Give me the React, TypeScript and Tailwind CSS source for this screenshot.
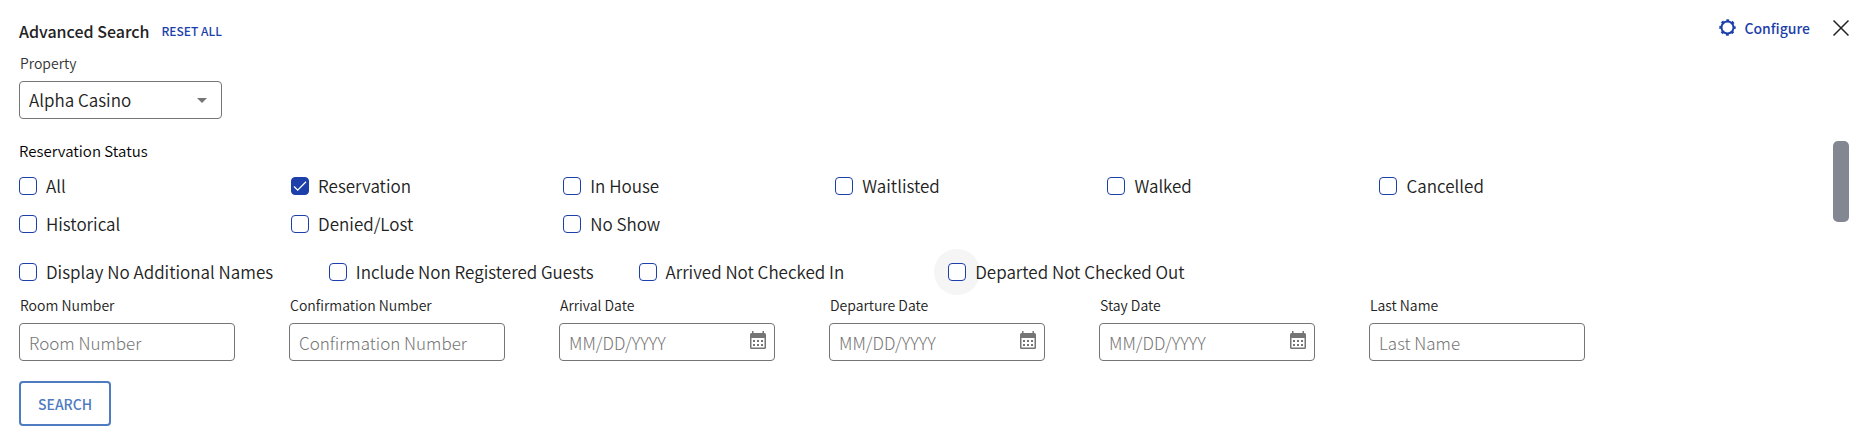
import { useState } from 'react';

const STATUSES = [
  'All',
  'Reservation',
  'In House',
  'Waitlisted',
  'Walked',
  'Cancelled',
  'Historical',
  'Denied/Lost',
  'No Show',
];

const OPTIONS = [
  'Display No Additional Names',
  'Include Non Registered Guests',
  'Arrived Not Checked In',
  'Departed Not Checked Out',
];

const FIELDS: { id: string; label: string; date?: boolean }[] = [
  { id: 'room', label: 'Room Number' },
  { id: 'confirmation', label: 'Confirmation Number' },
  { id: 'arrival', label: 'Arrival Date', date: true },
  { id: 'departure', label: 'Departure Date', date: true },
  { id: 'stay', label: 'Stay Date', date: true },
  { id: 'lastName', label: 'Last Name' },
];

function GearIcon() {
  return (
    <svg viewBox="0 0 17 17" className="size-[17px]" fill="none" stroke="currentColor" aria-hidden="true">
      <circle cx="8.5" cy="8.5" r="6" strokeWidth="2" />
      <circle cx="8.5" cy="8.5" r="7.3" strokeWidth="1.8" strokeDasharray="2.9 2.833" strokeDashoffset="1.45" />
    </svg>
  );
}

function CloseIcon() {
  return (
    <svg viewBox="0 0 16 16" className="size-4" fill="none" stroke="currentColor" strokeWidth="1.5" aria-hidden="true">
      <path d="M0.5 0.5l15 15M15.5 0.5l-15 15" />
    </svg>
  );
}

function CalendarIcon() {
  return (
    <svg viewBox="0 0 16 18" className="h-[18px] w-4" fill="currentColor" aria-hidden="true">
      <path
        fillRule="evenodd"
        d="M2 0h1.500v2h9V0H14v2h.5A1.500 1.500 0 0 1 16 3.500v13a1.500 1.500 0 0 1-1.500 1.500h-13A1.500 1.500 0 0 1 0 16.500v-13A1.500 1.500 0 0 1 1.500 2H2zM1.500 7v9.500h13V7z"
      />
      <path d="M3 9h2v2H3zM7 9h2v2H7zM11 9h2v2h-2zM3 13h2v2H3zM7 13h2v2H7zM11 13h2v2h-2z" />
    </svg>
  );
}

interface CheckProps {
  label: string;
  checked: boolean;
  highlighted?: boolean;
  onChange: () => void;
}

function Check({ label, checked, highlighted, onChange }: CheckProps) {
  return (
    <label className="flex h-[38px] items-center gap-[9px]">
      <span className="relative flex size-[18px] shrink-0">
        {highlighted && <span className="absolute -inset-[14px] rounded-full bg-[#f5f5f5]" />}
        <input
          type="checkbox"
          checked={checked}
          onChange={onChange}
          className="relative size-[18px] appearance-none rounded-[4px] border border-[#1c3faa] bg-white checked:bg-[#1c3faa]"
        />
        {checked && (
          <svg
            viewBox="0 0 18 18"
            className="pointer-events-none absolute inset-0 size-[18px] text-white"
            fill="none"
            stroke="currentColor"
            strokeWidth="1.3"
            aria-hidden="true"
          >
            <path d="M3 9.500l3.700 3.700L15 4.800" />
          </svg>
        )}
      </span>
      <span className="relative whitespace-nowrap">{label}</span>
    </label>
  );
}

export default function App() {
  const [selected, setSelected] = useState<string[]>(['Reservation']);

  const toggle = (name: string) => {
    setSelected(selected.includes(name) ? selected.filter((s) => s !== name) : [...selected, name]);
  };

  return (
    <main className="flex bg-white px-[19px] font-['Noto_Sans_CJK_SC','Noto_Sans',sans-serif] text-[17px] leading-6 font-[350] text-[#222]">
      <form className="min-w-0 flex-1 pt-[19px]" onSubmit={(e) => e.preventDefault()}>
        <header className="flex h-6 items-center gap-3">
          <h1 className="text-[16px] font-medium">Advanced Search</h1>
          <button type="button" className="text-[12px] font-medium text-[#1c3faa]">
            RESET ALL
          </button>
        </header>

        <label htmlFor="property" className="mt-2 block pl-px text-[14px] text-[#333]">
          Property
        </label>
        <div className="relative mt-[6px] w-[203px]">
          <select
            id="property"
            className="h-[38px] w-full appearance-none rounded-[4px] border border-[#757575] bg-white px-[9px]"
          >
            <option>Alpha Casino</option>
          </select>
          <svg
            viewBox="0 0 10 5"
            className="pointer-events-none absolute top-[17px] right-[15px] h-[5px] w-[10px] text-[#757575]"
            fill="currentColor"
            aria-hidden="true"
          >
            <path d="M0 0h10L5 5z" />
          </svg>
        </div>

        <fieldset className="mt-5">
          <legend className="text-[15px] text-black">Reservation Status</legend>
          <div className="mt-1 grid w-9/10 grid-cols-6">
            {STATUSES.map((s) => (
              <Check key={s} label={s} checked={selected.includes(s)} onChange={() => toggle(s)} />
            ))}
          </div>
        </fieldset>

        <div className="mt-[10px] mr-[575px] grid grid-cols-4">
          {OPTIONS.map((o) => (
            <Check
              key={o}
              label={o}
              checked={selected.includes(o)}
              highlighted={o === 'Departed Not Checked Out'}
              onChange={() => toggle(o)}
            />
          ))}
        </div>

        <div className="mt-[2px] mr-[248px] grid grid-cols-6 gap-x-[54px]">
          {FIELDS.map((f) => (
            <div key={f.id}>
              <label htmlFor={f.id} className="relative block pl-px text-[14px] whitespace-nowrap">
                {f.label}
              </label>
              <div className="relative mt-[6px]">
                <input
                  id={f.id}
                  type="text"
                  placeholder={f.date ? 'MM/DD/YYYY' : f.label}
                  className="h-[38px] w-full rounded-[4px] border border-[#757575] bg-white px-[9px] placeholder:font-light placeholder:text-[#757575]"
                />
                {f.date && (
                  <button
                    type="button"
                    aria-label={`Pick ${f.label}`}
                    className="absolute top-2 right-[9px] text-[#757575]"
                  >
                    <CalendarIcon />
                  </button>
                )}
              </div>
            </div>
          ))}
        </div>

        <button
          type="submit"
          className="mt-5 h-[45px] rounded-[4px] border-2 border-[#4f7cc0] px-[17px] text-[14px] font-medium text-[#4f7cc0]"
        >
          SEARCH
        </button>
      </form>

      <aside className="-ml-32 flex w-[144px] flex-col items-end pt-[19px]">
        <div className="flex h-[17px] items-center gap-[23px]">
          <button type="button" className="flex items-center gap-2 text-[14px] font-medium text-[#1c3faa]">
            <GearIcon />
            Configure
          </button>
          <button type="button" aria-label="Close" className="text-[#222]">
            <CloseIcon />
          </button>
        </div>
        <div className="mt-[105px] h-[81px] w-4 rounded-[5px] bg-[#828791]" />
      </aside>
    </main>
  );
}
